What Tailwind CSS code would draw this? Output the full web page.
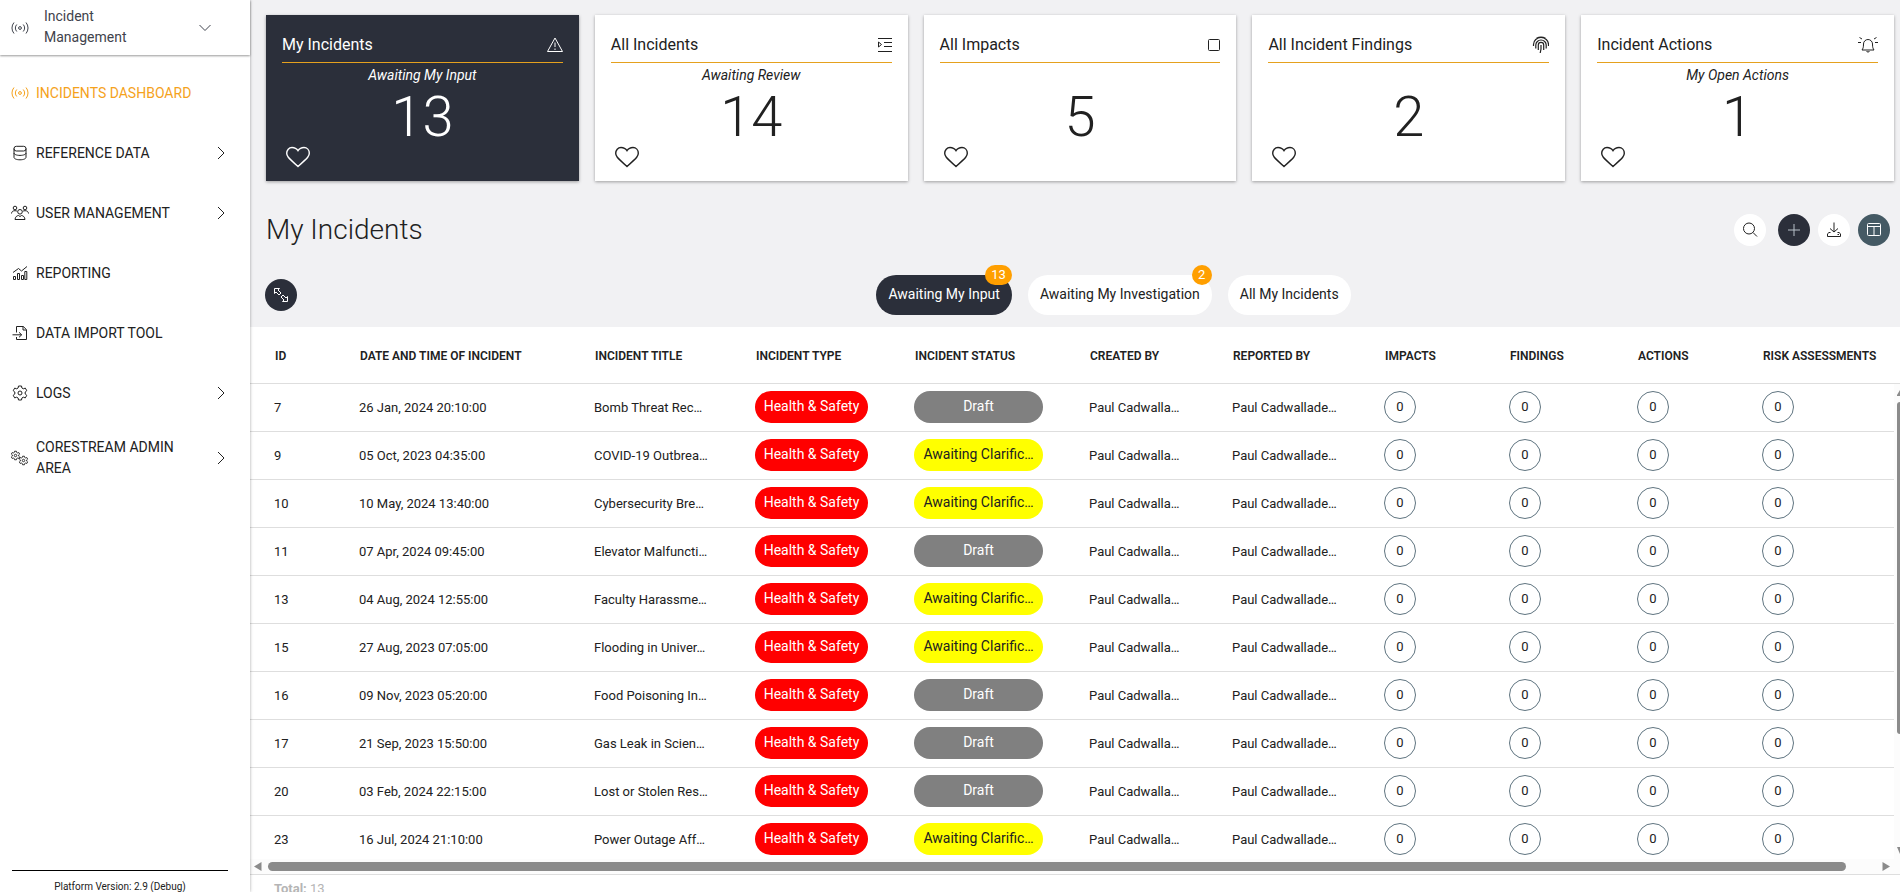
<!DOCTYPE html>
<html lang="en">
  <head>
    <meta charset="UTF-8" />
    <meta name="viewport" content="width=device-width, initial-scale=1.0" />
    <title>Incident Management</title>
    <script src="https://cdn.jsdelivr.net/npm/@tailwindcss/browser@4"></script>
  </head>
  <body class="flex h-screen overflow-hidden bg-[#f1f1f3] font-['Roboto',sans-serif] text-sm text-[#212121]">
    <!-- shared icons -->
    <svg class="hidden" aria-hidden="true">
      <symbol id="i-signal" viewBox="0 0 18 18">
        <circle cx="9" cy="9" r="1.4" />
        <path d="M5.800 5.500a5 5 0 0 0 0 7M12.200 5.500a5 5 0 0 1 0 7M3 3.500a8.500 8.500 0 0 0 0 11M15 3.500a8.500 8.500 0 0 1 0 11" />
      </symbol>
      <symbol id="i-data" viewBox="0 0 18 18">
        <path d="M3 4.500v8.800c0 1.500 2.600 2.500 6 2.500s6-1 6-2.500V4.500M3 9c0 1.400 2.600 2.400 6 2.400S15 10.400 15 9" />
        <rect x="3" y="2.300" width="12" height="4.700" rx="2.300" />
      </symbol>
      <symbol id="i-users" viewBox="0 0 18 18">
        <circle cx="4" cy="4" r="1.800" /><circle cx="14" cy="4" r="1.800" /><circle cx="9" cy="7.800" r="2.300" />
        <path d="M.5 9.500C.7 7.500 2 6.700 4 6.700c1 0 1.700.2 2.200.7M17.500 9.500c-.2-2-1.500-2.800-3.500-2.800-1 0-1.700.2-2.200.7M4 15.500c.2-2.600 1.800-3.800 3.500-4l1.500 1 1.500-1c1.700.2 3.300 1.400 3.500 4z" />
      </symbol>
      <symbol id="i-report" viewBox="0 0 18 18">
        <path d="M2.500 15.500v-3h2v3zM6.500 15.500V9.500h2v6zM10.500 15.500v-4h2v4zM13.800 15.500V7.500h2v8zM2 8.500l5.500-4 3 2.500L16 2.500" />
      </symbol>
      <symbol id="i-import" viewBox="0 0 18 18">
        <path d="M5.500 8.500v-6h6.800l3.200 3.200v9.800h-10v-2.500M12 2.500V6h3.500M1.500 10.800h9M8 8.300l2.700 2.500L8 13.300" />
      </symbol>
      <symbol id="i-gear" viewBox="0 0 18 18">
        <circle cx="9" cy="9" r="2" />
        <path d="M7.500 2h3l.4 2 1.400.8 2-.7 1.500 2.600-1.600 1.300v2l1.600 1.300-1.500 2.600-2-.7-1.400.8-.4 2h-3l-.4-2-1.400-.8-2 .7-1.500-2.600L3.800 10V8L2.200 6.700l1.500-2.600 2 .7L7.100 4z" />
      </symbol>
      <symbol id="i-heart" viewBox="0 0 24 24">
        <path d="M12 21.500C8 18 4 14.500 2.300 12.300.7 10.300.7 9.300.7 8.300.7 5 3 2.500 6 2.500c2.500 0 4.600 1 6 3.200 1.400-2.200 3.500-3.200 6-3.200 3 0 5.300 2.500 5.300 5.800 0 1 0 2-1.600 4C20 14.500 16 18 12 21.500z" />
      </symbol>
      <symbol id="i-right" viewBox="0 0 8 14"><path d="M1 1l6 6-6 6" /></symbol>
    </svg>

    <aside class="z-10 flex w-[250px] shrink-0 flex-col bg-white shadow-[0_0_3px_rgba(0,0,0,0.35)]">
      <button class="flex h-[55px] shrink-0 items-center pr-[39px] pl-[11px] text-left leading-[21px] text-[#3f434c] shadow-[0_1px_2px_rgba(0,0,0,0.4)]">
        <svg class="size-[18px] fill-none stroke-current"><use href="#i-signal" /></svg>
        <span class="ml-[15px] w-28 pb-0.5">Incident Management</span>
        <svg class="ml-auto h-2 w-3 fill-none stroke-current" viewBox="0 0 12 8"><path d="M.5 1L6 6.500 11.500 1" /></svg>
      </button>
      <nav id="menu" class="mt-[14px] flex flex-col gap-3"></nav>
      <div class="mr-[22px] ml-3 mt-auto h-5 border-t border-black pt-2 text-center text-[10px] leading-4">Platform Version: 2.9 (Debug)</div>
      <div class="h-0.5 shrink-0"></div>
    </aside>

    <main class="flex min-w-0 flex-1 flex-col">
      <section id="cards" class="grid grid-cols-5 gap-4 pt-[15px] pr-1.5 pl-4"></section>

      <div class="mt-[33px] flex items-center pr-2.5 pl-4">
        <h1 class="text-[28px] leading-8 font-light">My Incidents</h1>
        <div class="ml-auto flex gap-2">
          <button aria-label="Search" class="mr-1 flex size-8 items-center justify-center rounded-full bg-white">
            <svg class="size-4 fill-none stroke-current" viewBox="0 0 16 16"><circle cx="7" cy="6.500" r="5.500" /><path d="M11 10.500l4 4" /></svg>
          </button>
          <button aria-label="Add" class="flex size-8 items-center justify-center rounded-full bg-[#2b2f3a] text-[#b9c2c9]">
            <svg class="size-3 stroke-current" viewBox="0 0 12 12"><path d="M6 0v12M0 6h12" /></svg>
          </button>
          <button aria-label="Download" class="flex size-8 items-center justify-center rounded-full bg-white">
            <svg class="size-4 fill-none stroke-current" viewBox="0 0 16 16"><path d="M8 .5v9.500M4 6.500L8 10l4-3.500M4.500 10.500H3l-1.500 1.300v2.700h13v-2.700L13 10.500h-1.500M11.500 12.500h1.500" /></svg>
          </button>
          <button aria-label="Table layout" class="flex size-8 items-center justify-center rounded-full bg-[#455a64] text-white">
            <svg class="size-4 fill-none stroke-current" viewBox="0 0 16 16"><rect x="1.500" y="1.500" width="13" height="12" rx="1" /><path d="M1.500 4.500h13M8 5v8.500" /></svg>
          </button>
        </div>
      </div>

      <div class="mt-[29px] mb-3 flex items-center pl-[15px]">
        <button aria-label="Expand" class="flex size-8 items-center justify-center rounded-full bg-[#2b2f3a] text-white">
          <svg class="size-4 fill-none stroke-current" viewBox="0 0 16 16"><path d="M1.500 6.500v-5h5L5 3l3 3-2 2-3-3zM14.500 9.500v5h-5l1.500-1.500-3-3 2-2 3 3z" /></svg>
        </button>
        <div class="flex flex-1 justify-center gap-4 pl-[30px]">
          <button class="relative h-10 rounded-full bg-[#2b2f3a] px-3 pb-0.5 text-white">Awaiting My Input<span class="absolute -top-2.5 right-0 h-5 min-w-5 rounded-full bg-[#ff9f00] px-1.5 text-[13px] leading-5 text-white">13</span></button>
          <button class="relative h-10 rounded-full bg-white px-3 pb-0.5">Awaiting My Investigation<span class="absolute -top-2.5 right-0 h-5 min-w-5 rounded-full bg-[#ff9f00] px-1.5 text-[13px] leading-5 text-white">2</span></button>
          <button class="h-10 rounded-full bg-white px-3 pb-0.5">All My Incidents</button>
        </div>
      </div>

      <div class="flex min-h-0 flex-1 overflow-hidden bg-white">
        <div class="min-w-0 flex-1">
          <table class="w-full table-fixed border-collapse text-left">
            <colgroup>
              <col class="w-[85px]" /><col class="w-[235px]" /><col class="w-[161px]" /><col class="w-[159px]" />
              <col class="w-[175px]" /><col class="w-[143px]" /><col class="w-[152px]" /><col class="w-[125px]" />
              <col class="w-[128px]" /><col class="w-[125px]" /><col class="w-[156px]" />
            </colgroup>
            <thead>
              <tr id="head" class="h-14 border-b border-[#dedede] text-xs"></tr>
            </thead>
            <tbody id="rows" class="text-[13px]"></tbody>
          </table>
        </div>
        <div class="flex w-1.5 shrink-0 flex-col items-end overflow-hidden bg-[#fcfcfc]">
          <div class="h-[57px] w-full shrink-0 border-b border-[#dedede] bg-white"></div>
          <svg class="mt-1.5 h-1.5 w-[3px] shrink-0 fill-[#8b8b8b]" viewBox="0 0 3 6"><path d="M0 5L3 0v6H0z" /></svg>
          <div class="mt-1.5 h-[332px] w-[3px] shrink-0 rounded-tl-full rounded-bl-full bg-[#8b8b8b]"></div>
          <svg class="mt-auto mb-1 h-2 w-[3px] shrink-0 fill-[#8b8b8b]" viewBox="0 0 3 8"><path d="M0 0h3v7z" /></svg>
        </div>
      </div>
      <div class="flex h-[15px] shrink-0 items-center bg-[#fcfcfc] pr-2.5 pl-1">
        <svg class="h-[9px] w-2 fill-[#8b8b8b]" viewBox="0 0 8 9"><path d="M7.500 0v9L0 4.500z" /></svg>
        <div class="mr-9 ml-1.5 h-[9px] flex-1 rounded-full bg-[#8b8b8b]"></div>
        <svg class="h-[9px] w-2 fill-[#8b8b8b]" viewBox="0 0 8 9"><path d="M.5 0v9L8 4.500z" /></svg>
      </div>
      <div class="h-[18px] shrink-0 border-t border-[#dedede] bg-white pt-1 pl-6 text-[13px] leading-5 text-[#b5b5b5]"><b>Total:</b> 13</div>
    </main>

    <script>
      const menu = [
        ["i-signal", "INCIDENTS DASHBOARD", false],
        ["i-data", "REFERENCE DATA", true],
        ["i-users", "USER MANAGEMENT", true],
        ["i-report", "REPORTING", false],
        ["i-import", "DATA IMPORT TOOL", false],
        ["i-gear", "LOGS", true],
        ["gears", "CORESTREAM ADMIN AREA", true],
      ];
      const gears = `<svg class="size-[18px] shrink-0 fill-none stroke-current"><use href="#i-gear" x="-1" y="1" width="11" height="11" stroke-width="1.5" /><use href="#i-gear" x="7" y="6" width="11" height="11" stroke-width="1.5" /></svg>`;

      document.getElementById("menu").innerHTML = menu.map(([icon, label, sub], i) => `
        <a href="#" class="flex min-h-12 items-center py-2 pr-[25px] pl-[11px] leading-[21px] ${i === 0 ? "text-[#f5a21c]" : ""}">
          ${icon === "gears" ? gears : `<svg class="size-[18px] shrink-0 fill-none stroke-current"><use href="#${icon}" /></svg>`}
          <span class="ml-[7px] w-40">${label}</span>
          ${sub ? `<svg class="ml-auto h-[14px] w-2 fill-none stroke-current"><use href="#i-right" /></svg>` : ""}
        </a>`).join("");

      const cards = [
        ["My Incidents", "Awaiting My Input", 13, `<path d="M12 3L4.500 16.500h15zM12 7.500V12M12 13.500V15" stroke-linejoin="round" />`],
        ["All Incidents", "Awaiting Review", 14, `<path d="M6 3.500h14M12 7.500h8M12 11.500h8M6 16.500h14M6.500 7v5l3-2.500z" />`],
        ["All Impacts", "", 5, `<rect x="8.500" y="4.500" width="11" height="11" rx="1" />`],
        ["All Incident Findings", "", 2, `<path stroke-width="1.2" d="M7.500 3.300a9 9 0 0 1 9 0M4.500 11V9.500A7.500 7 0 0 1 19.500 9.500V11M6.800 13.500V10a5.200 5 0 0 1 10.400 0v3.500M9.300 15V10a2.700 2.700 0 0 1 5.400 0v5M12 10v4l-.8 4" />`],
        ["Incident Actions", "My Open Actions", 1, `<path d="M4 15c1-1.500 1.500-2.500 1.500-6a4.500 4.500 0 0 1 9 0c0 3.500.5 4.500 1.500 6zM8.500 16a1.600 1.600 0 0 0 3 0M0 7.500h3M17 7.500h3M1.500 2.500L4 4M18.500 2.500L16 4" />`],
      ];

      document.getElementById("cards").innerHTML = cards.map(([title, sub, count, icon], i) => `
        <article class="flex h-[166px] flex-col px-4 pt-4 shadow-[0_1px_3px_rgba(0,0,0,0.35)] ${i === 0 ? "bg-[#2b2f3a] text-white" : "bg-white"}">
          <div class="flex h-8 shrink-0 items-center justify-between border-b border-[#e5a11e] pb-1">
            <h2 class="text-base">${title}</h2>
            <svg class="size-5 fill-none stroke-current" viewBox="0 0 20 20">${icon}</svg>
          </div>
          <p class="h-6 text-center leading-6 italic">${sub}</p>
          <p class="text-center text-[56px] leading-[60px] font-light">${count}</p>
          <button aria-label="Favourite" class="-mt-0.5 ml-1 size-6"><svg class="size-6 fill-none stroke-current stroke-[1.4]"><use href="#i-heart" /></svg></button>
        </article>`).join("");

      const headings = ["ID", "DATE AND TIME OF INCIDENT", "INCIDENT TITLE", "INCIDENT TYPE", "INCIDENT STATUS", "CREATED BY", "REPORTED BY", "IMPACTS", "FINDINGS", "ACTIONS", "RISK ASSESSMENTS"];
      document.getElementById("head").innerHTML = headings.map((h) => `<th class="pt-0.5 pl-[25px] font-semibold whitespace-nowrap">${h}</th>`).join("");

      const rows = [
        [7, "26 Jan, 2024 20:10:00", "Bomb Threat Rec…", "Draft"],
        [9, "05 Oct, 2023 04:35:00", "COVID-19 Outbrea…", "Awaiting Clarific…"],
        [10, "10 May, 2024 13:40:00", "Cybersecurity Bre…", "Awaiting Clarific…"],
        [11, "07 Apr, 2024 09:45:00", "Elevator Malfuncti…", "Draft"],
        [13, "04 Aug, 2024 12:55:00", "Faculty Harassme…", "Awaiting Clarific…"],
        [15, "27 Aug, 2023 07:05:00", "Flooding in Univer…", "Awaiting Clarific…"],
        [16, "09 Nov, 2023 05:20:00", "Food Poisoning In…", "Draft"],
        [17, "21 Sep, 2023 15:50:00", "Gas Leak in Scien…", "Draft"],
        [20, "03 Feb, 2024 22:15:00", "Lost or Stolen Res…", "Draft"],
        [23, "16 Jul, 2024 21:10:00", "Power Outage Aff…", "Awaiting Clarific…"],
      ];
      const counter = `<td class="pl-6"><button class="block size-8 rounded-full border border-[#5f7480]">0</button></td>`;

      document.getElementById("rows").innerHTML = rows.map(([id, date, title, status]) => `
        <tr class="h-12 border-b border-[#dedede] whitespace-nowrap">
          <td class="pt-0.5 pl-6">${id}</td>
          <td class="pt-0.5 pl-6">${date}</td>
          <td class="pt-0.5 pl-6">${title}</td>
          <td class="pl-6"><span class="block h-8 w-[113px] rounded-full bg-[#ff0000] text-center text-sm leading-[30px] text-white">Health &amp; Safety</span></td>
          <td class="pl-6"><span class="block h-8 w-[129px] rounded-full text-center text-sm leading-[30px] ${status === "Draft" ? "bg-[#808080] text-white" : "bg-[#ffff00]"}">${status}</span></td>
          <td class="pt-0.5 pl-6">Paul Cadwalla…</td>
          <td class="pt-0.5 pl-6">Paul Cadwallade…</td>
          ${counter.repeat(4)}
        </tr>`).join("");
    </script>
  </body>
</html>
